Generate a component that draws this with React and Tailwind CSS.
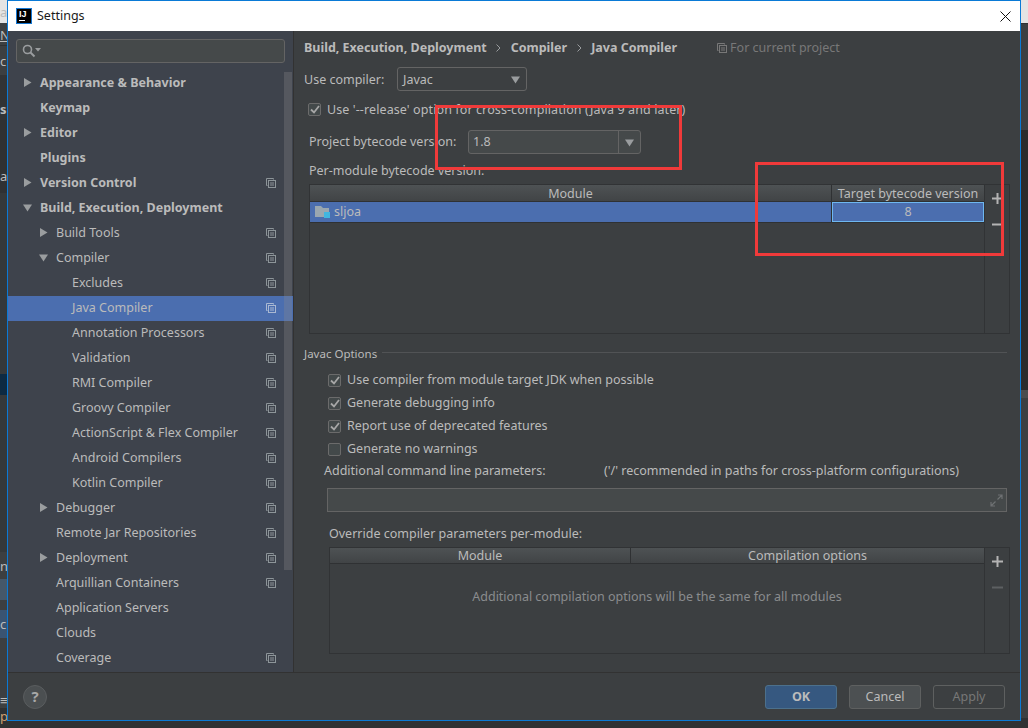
import React from "react";

const Tri = ({ down, className = "" }) => (
  <svg width="9" height="9" viewBox="0 0 9 9" className={className}>
    {down ? <path d="M0 1.5h9L4.5 8.5z" fill="#9a9d9f" /> : <path d="M1 0l7.5 4.5L1 9z" fill="#9a9d9f" />}
  </svg>
);

const ProjIcon = ({ color = "#8d9599" }) => (
  <svg width="10" height="10" viewBox="0 0 10 10" fill="none" stroke={color} strokeWidth="1">
    <path d="M7.5 1.5V.5h-7v7h1" />
    <rect x="2.5" y="2.5" width="7" height="7" />
    <path d="M4 5h4M4 7h4" />
  </svg>
);

const tree = [
  { t: "Appearance & Behavior", l: 0, b: 1, a: "r" },
  { t: "Keymap", l: 0, b: 1 },
  { t: "Editor", l: 0, b: 1, a: "r" },
  { t: "Plugins", l: 0, b: 1 },
  { t: "Version Control", l: 0, b: 1, a: "r", p: 1 },
  { t: "Build, Execution, Deployment", l: 0, b: 1, a: "d" },
  { t: "Build Tools", l: 1, a: "r", p: 1 },
  { t: "Compiler", l: 1, a: "d", p: 1 },
  { t: "Excludes", l: 2, p: 1 },
  { t: "Java Compiler", l: 2, p: 1, s: 1 },
  { t: "Annotation Processors", l: 2, p: 1 },
  { t: "Validation", l: 2, p: 1 },
  { t: "RMI Compiler", l: 2, p: 1 },
  { t: "Groovy Compiler", l: 2, p: 1 },
  { t: "ActionScript & Flex Compiler", l: 2, p: 1 },
  { t: "Android Compilers", l: 2, p: 1 },
  { t: "Kotlin Compiler", l: 2, p: 1 },
  { t: "Debugger", l: 1, a: "r", p: 1 },
  { t: "Remote Jar Repositories", l: 1, p: 1 },
  { t: "Deployment", l: 1, a: "r", p: 1 },
  { t: "Arquillian Containers", l: 1, p: 1 },
  { t: "Application Servers", l: 1 },
  { t: "Clouds", l: 1 },
  { t: "Coverage", l: 1, p: 1 },
];

const Row = ({ r }) => {
  const pad = r.l === 0 ? "pl-[32px]" : r.l === 1 ? "pl-[48px]" : "pl-[64px]";
  const arrowPos = r.l === 0 ? "left-[15px]" : "left-[31px]";
  return (
    <div className={`relative flex items-center h-[25px] pb-[1px] pr-[17px] ${pad} ${r.s ? "bg-[#4b6eaf]" : ""}`}>
      {r.a && <Tri down={r.a === "d"} className={`absolute top-[7px] ${arrowPos}`} />}
      <span className={`flex-1 ${r.b ? "font-bold" : ""}`}>{r.t}</span>
      {r.p && <ProjIcon color={r.s ? "#a9b8d2" : "#8d9599"} />}
    </div>
  );
};

const Check = ({ on, label }) => (
  <div className="flex items-center h-[23px]">
    <span className="flex items-center justify-center w-[13px] h-[13px] rounded-[2px] border border-[#6b6b6b] bg-[#43494a] shrink-0">
      {on && (
        <svg width="10" height="9" viewBox="0 0 10 9" fill="none" stroke="#a7a7a7" strokeWidth="1.8">
          <path d="M1 4.5l3 3L9 1" />
        </svg>
      )}
    </span>
    <span className="ml-[6px]">{label}</span>
  </div>
);

const PlusMinus = ({ dim }) => (
  <div className="w-[25px] border-l border-[#313335] shrink-0 flex flex-col items-center">
    <svg width="11" height="11" viewBox="0 0 11 11" className="mt-[8px]">
      <path d="M0 5.5h11M5.5 0v11" stroke="#b4b4b4" strokeWidth="2" />
    </svg>
    <svg width="11" height="3" viewBox="0 0 11 3" className="mt-[19px]">
      <path d="M0 1.5h11" stroke={dim ? "#5d6062" : "#b4b4b4"} strokeWidth="2" />
    </svg>
  </div>
);

const Btn = ({ children, cls }) => (
  <div className={`w-[72px] h-[24px] rounded-[3px] border flex items-center justify-center pt-[2px] ${cls}`}>{children}</div>
);

const Strip = ({ h, cls, children }) => (
  <div className={`overflow-hidden shrink-0 text-[13px] leading-none text-[#bbbbbb] ${h} ${cls}`}>{children}</div>
);

export default function App() {
  return (
    <div
      className="relative flex w-[1028px] h-[728px] overflow-hidden bg-[#2f3133] text-[12.5px] text-[#bbbbbb]"
      style={{ fontFamily: '"Noto Sans", sans-serif' }}
    >
      {/* background IDE, left */}
      <div className="w-[7px] h-[728px] flex flex-col shrink-0">
        <Strip h="h-[23px]" cls="bg-[#e4e4e4] pt-[6px] text-[#777777]">a</Strip>
        <Strip h="h-[22px]" cls="bg-[#3c3f41] pt-[6px] underline">N</Strip>
        <Strip h="h-[30px]" cls="bg-[#3c3f41] pt-[9px] border-t border-[#2f3133]">c</Strip>
        <Strip h="h-[45px]" cls="bg-[#313335] pt-[28px] font-bold">sl</Strip>
        <Strip h="h-[73px]" cls="bg-[#2f3133] pt-[50px]">a</Strip>
        <Strip h="h-[181px]" cls="bg-[#34383a]"></Strip>
        <Strip h="h-[21px]" cls="bg-[#0d2a42]"></Strip>
        <Strip h="h-[157px]" cls="bg-[#34383a]"></Strip>
        <Strip h="h-[27px]" cls="bg-[#3c3f41] pt-[8px]">n</Strip>
        <Strip h="h-[21px]" cls="bg-[#45586a]"></Strip>
        <Strip h="h-[10px]" cls="bg-[#3c3f41]"></Strip>
        <Strip h="h-[28px]" cls="bg-[#3a5472] pt-[8px]">c</Strip>
        <Strip h="h-[46px]" cls="bg-[#3c3f41]"></Strip>
        <Strip h="h-[24px]" cls="bg-[#3c3f41] pt-[10px] font-bold">≡</Strip>
        <Strip h="h-[20px]" cls="bg-[#2f3133] pt-[2px] text-[#d0a070]">p</Strip>
      </div>

      {/* dialog */}
      <div className="w-[1014px] h-[721px] shrink-0 flex flex-col border border-[#0a7ad6] bg-[#3c3f41]">
        {/* title */}
        <div className="h-[30px] shrink-0 bg-white flex items-center pl-[8px] pr-[9px] text-[#1a1a1a]">
          <div className="w-[16px] h-[16px] bg-black border border-[#1677d2] flex flex-col items-start pl-[2px]">
            <span className="text-[9px] leading-[10px] font-bold text-white" style={{ fontFamily: '"Liberation Sans", sans-serif' }}>IJ</span>
            <span className="w-[6px] h-[1px] bg-white mt-[1px]"></span>
          </div>
          <span className="ml-[5px] flex-1">Settings</span>
          <svg width="11" height="11" viewBox="0 0 11 11" stroke="#111" strokeWidth="1">
            <path d="M.5.5l10 10M10.5.5l-10 10" />
          </svg>
        </div>

        {/* body */}
        <div className="flex flex-1 min-h-0">
          {/* sidebar */}
          <div className="relative w-[286px] shrink-0 bg-[#3e434c] border-r border-[#323232] flex flex-col">
            <div className="mt-[8px] ml-[8px] w-[269px] h-[24px] shrink-0 rounded-[3px] border border-[#646464] bg-[#45494a] flex items-center pl-[5px]">
              <svg width="21" height="14" viewBox="0 0 21 14" fill="none">
                <circle cx="5.5" cy="5.5" r="4" stroke="#9a9d9f" strokeWidth="1.6" />
                <path d="M8.5 8.5l4 4" stroke="#9a9d9f" strokeWidth="2" />
                <path d="M13 4h6l-3 3.5z" fill="#9a9d9f" />
              </svg>
            </div>
            <div className="mt-[8px]">
              {tree.map((r) => (
                <Row key={r.t} r={r} />
              ))}
            </div>
            {/* scrollbar */}
            <div className="absolute left-[276px] top-[41px] w-[8px] h-[498px] bg-[#8a8a8a]/30"></div>
          </div>

          {/* main */}
          <div className="flex-1 pl-[10px] min-w-0">
            <div className="flex items-center h-[20px] mt-[7px] font-bold">
              <span>Build, Execution, Deployment</span>
              <svg width="5" height="8" viewBox="0 0 5 8" fill="none" stroke="#9a9d9f" className="mx-[9.5px]"><path d="M.5.5L4 4 .5 7.5" /></svg>
              <span>Compiler</span>
              <svg width="5" height="8" viewBox="0 0 5 8" fill="none" stroke="#9a9d9f" className="mx-[9.5px]"><path d="M.5.5L4 4 .5 7.5" /></svg>
              <span>Java Compiler</span>
              <span className="ml-[40px] flex items-center font-normal text-[#787878]">
                <ProjIcon color="#787878" />
                <span className="ml-[3px]">For current project</span>
              </span>
            </div>

            <div className="flex items-center h-[24px] mt-[9px]">
              <span className="w-[93px] pt-[2px]">Use compiler:</span>
              <div className="w-[130px] h-[24px] rounded-[3px] border border-[#646464] flex items-center justify-between pl-[5px] pr-[5px]">
                <span className="pt-[2px]">Javac</span>
                <Tri down className="mr-[1px]" />
              </div>
            </div>

            <div className="flex items-center h-[18px] mt-[9px] ml-[4px]">
              <span className="flex items-center justify-center w-[13px] h-[13px] rounded-[2px] border border-[#6b6b6b] bg-[#43494a]">
                <svg width="10" height="9" viewBox="0 0 10 9" fill="none" stroke="#a7a7a7" strokeWidth="1.8"><path d="M1 4.5l3 3L9 1" /></svg>
              </span>
              <span className="ml-[6px] pt-[2px] tracking-[0.1px]">Use '--release' option for cross-compilation (Java 9 and later)</span>
            </div>

            <div className="flex items-center h-[24px] mt-[12px] ml-[5px]">
              <span className="w-[159px] pt-[1px]">Project bytecode version:</span>
              <div className="w-[173px] h-[24px] rounded-[3px] border border-[#646464] bg-[#45494a] flex items-center">
                <span className="pl-[4px] pt-[1px] flex-1">1.8</span>
                <span className="w-[22px] h-full border-l border-[#646464] flex items-center justify-center">
                  <Tri down />
                </span>
              </div>
            </div>

            <div className="ml-[5px] h-[20px] mt-[7px] pt-[1px] flex items-center">Per-module bytecode version:</div>

            <div className="ml-[5px] mt-[3px] w-[701px] h-[150px] border border-[#313335] flex">
              <div className="flex-1 flex flex-col">
                <div className="flex h-[16px] bg-linear-to-b from-[#4e5254] to-[#414446] border-b border-[#2f3133] box-content">
                  <div className="w-[522px] flex items-center justify-center border-r border-[#2f3133] pt-[2px]">Module</div>
                  <div className="flex-1 flex items-center justify-center pt-[2px]">Target bytecode version</div>
                </div>
                <div className="flex h-[21px] bg-[#4b6eaf] border-b border-[#2f3133]">
                  <div className="w-[522px] border-r border-[#2f3133] flex items-center pl-[5px]">
                    <svg width="16" height="14" viewBox="0 0 16 14">
                      <path d="M0 1h6l2 2h6v9H0z" fill="#9aa7b0" />
                      <rect x="9" y="7" width="6" height="6" fill="#40b6e0" />
                    </svg>
                    <span className="ml-[3px]">sljoa</span>
                  </div>
                  <div className="flex-1 border border-[#6eb7f0] flex items-center justify-center">8</div>
                </div>
              </div>
              <PlusMinus />
            </div>

            <div className="flex items-center h-[20px] mt-[10px]">
              <span className="text-[11.5px] pb-[1px]">Javac Options</span>
              <span className="ml-[5px] w-[625px] h-[1px] bg-[#515355] mb-[3px]"></span>
            </div>

            <div className="ml-[24px] mt-[5px] flex flex-col">
              <Check on label="Use compiler from module target JDK when possible" />
              <Check on label="Generate debugging info" />
              <Check on label="Report use of deprecated features" />
              <Check label="Generate no warnings" />
            </div>

            <div className="flex items-center h-[20px] ml-[20px] mt-[1px] pb-[2px]">
              <span className="w-[280px]">Additional command line parameters:</span>
              <span>('/' recommended in paths for cross-platform configurations)</span>
            </div>

            <div className="ml-[23px] mt-[6px] w-[680px] h-[24px] border border-[#646464] bg-[#45494a] flex items-center justify-end pr-[3px]">
              <svg width="13" height="13" viewBox="0 0 13 13" stroke="#6e7173" fill="none" strokeWidth="1.2">
                <path d="M7.5 5.5L12 1M8 1h4v4M5.5 7.5L1 12M1 8v4h4" />
              </svg>
            </div>

            <div className="ml-[25px] h-[20px] mt-[12px] flex items-center">Override compiler parameters per-module:</div>

            <div className="ml-[25px] mt-[3px] w-[681px] h-[107px] border border-[#313335] flex">
              <div className="flex-1 flex flex-col">
                <div className="flex h-[15px] bg-linear-to-b from-[#4e5254] to-[#414446] border-b border-[#2f3133] box-content">
                  <div className="w-[301px] flex items-center justify-center border-r border-[#2f3133] pt-[2px]">Module</div>
                  <div className="flex-1 flex items-center justify-center pt-[2px]">Compilation options</div>
                </div>
                <div className="flex-1 flex items-center justify-center text-[#8a8c8e] pb-[23px]">
                  Additional compilation options will be the same for all modules
                </div>
              </div>
              <PlusMinus dim />
            </div>
          </div>
        </div>

        {/* footer */}
        <div className="h-[48px] shrink-0 border-t border-[#323232] flex items-center justify-between pl-[15px] pr-[15px]">
          <div className="w-[24px] h-[24px] rounded-full border border-[#5a5d5f] bg-[#4b4f51] flex items-center justify-center font-bold text-[15px] text-[#a8a8a8]">?</div>
          <div className="flex gap-[12px]">
            <Btn cls="bg-[#365880] border-[#4c708c] font-bold">OK</Btn>
            <Btn cls="bg-[#4c5052] border-[#5e6060]">Cancel</Btn>
            <Btn cls="border-[#5e6060] text-[#777777]">Apply</Btn>
          </div>
        </div>
      </div>

      {/* background IDE, right */}
      <div className="w-[7px] h-[728px] flex flex-col shrink-0">
        <Strip h="h-[23px]" cls="bg-[#e4e4e4]"></Strip>
        <Strip h="h-[107px]" cls="bg-[#3c3f41] border-t border-[#2f3133]"></Strip>
        <Strip h="h-[260px]" cls="bg-[#2b2b2b]"></Strip>
        <Strip h="h-[8px]" cls="bg-[#4a4c4e]"></Strip>
        <Strip h="h-[320px]" cls="bg-[#3c3f41]"></Strip>
        <Strip h="h-[10px]" cls="bg-[#2f3133]"></Strip>
      </div>

      {/* annotations drawn over the screenshot */}
      <div className="absolute left-[435px] top-[105px] w-[247px] h-[65px] border-[3px] border-[#f03a3a]"></div>
      <div className="absolute left-[755px] top-[162px] w-[249px] h-[94px] border-[3px] border-[#f03a3a]"></div>
    </div>
  );
}
